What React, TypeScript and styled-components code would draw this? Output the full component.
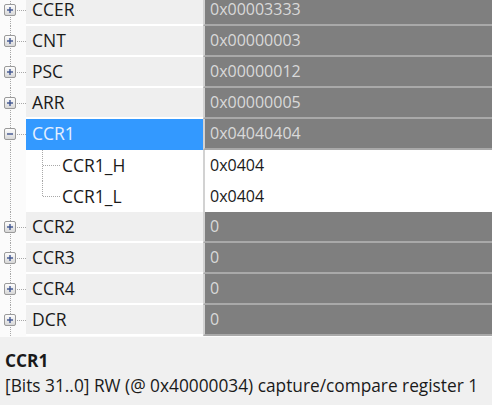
import { FunctionComponent } from 'react'
import { styled, createGlobalStyle } from 'styled-components'

type Register = {
  name: string
  value: string
  kind: 'collapsed' | 'expanded' | 'child'
  last?: boolean
}

const registers: Register[] = [
  { name: 'CCER', value: '0x00003333', kind: 'collapsed' },
  { name: 'CNT', value: '0x00000003', kind: 'collapsed' },
  { name: 'PSC', value: '0x00000012', kind: 'collapsed' },
  { name: 'ARR', value: '0x00000005', kind: 'collapsed' },
  { name: 'CCR1', value: '0x04040404', kind: 'expanded' },
  { name: 'CCR1_H', value: '0x0404', kind: 'child' },
  { name: 'CCR1_L', value: '0x0404', kind: 'child', last: true },
  { name: 'CCR2', value: '0', kind: 'collapsed' },
  { name: 'CCR3', value: '0', kind: 'collapsed' },
  { name: 'CCR4', value: '0', kind: 'collapsed' },
  { name: 'DCR', value: '0', kind: 'collapsed' }
]

const Gutter: FunctionComponent<{ kind: Register['kind'] }> = ({ kind }) => (
  <svg width='26' height='31' viewBox='0 0 26 31'>
    <line x1='10.5' y1='0' x2='10.5' y2='31' stroke='#a8a8a8' strokeDasharray='1 1' />
    {kind !== 'child' && (
      <>
        <line x1='15' y1='15.5' x2='26' y2='15.5' stroke='#a8a8a8' strokeDasharray='1 1' />
        <defs>
          <linearGradient id='boxFill' x1='0' y1='0' x2='0' y2='1'>
            <stop offset='0' stopColor='#ffffff' />
            <stop offset='1' stopColor='#d6d6d6' />
          </linearGradient>
        </defs>
        <rect x='4.5' y='9.5' width='11' height='11' rx='1.5' fill='url(#boxFill)' stroke='#9a9a9a' />
        <line x1='7' y1='15' x2='13' y2='15' stroke='#3f5590' strokeWidth='1.4' />
        {kind === 'collapsed' && <line x1='10' y1='12' x2='10' y2='18' stroke='#3f5590' strokeWidth='1.4' />}
      </>
    )}
  </svg>
)

const ChildLines: FunctionComponent<{ last?: boolean }> = ({ last }) => (
  <svg width='34' height='31' viewBox='0 0 34 31'>
    <line x1='16.5' y1='0' x2='16.5' y2={last ? 15.5 : 31} stroke='#a8a8a8' strokeDasharray='1 1' />
    <line x1='17' y1='15.5' x2='34' y2='15.5' stroke='#a8a8a8' strokeDasharray='1 1' />
  </svg>
)

const App: FunctionComponent = () => {
  return (
    <>
      <GlobalStyle />
      <Window>
        <Viewport>
          <List>
            {registers.map((reg) => (
              <Row key={reg.name}>
                <GutterCell>
                  <Gutter kind={reg.kind} />
                </GutterCell>
                <NameCell $kind={reg.kind}>
                  {reg.kind === 'child' && <ChildLines last={reg.last} />}
                  <span>{reg.name}</span>
                </NameCell>
                <ValueCell $child={reg.kind === 'child'}>{reg.value}</ValueCell>
              </Row>
            ))}
          </List>
        </Viewport>
        <InfoPanel>
          <InfoTitle>CCR1</InfoTitle>
          <InfoText>[Bits 31..0] RW (@ 0x40000034) capture/compare register 1</InfoText>
        </InfoPanel>
      </Window>
    </>
  )
}
export default App

const GlobalStyle = createGlobalStyle`
  html, body {
    margin: 0;
    padding: 0;
    background: #f0f0f0;
  }
  body {
    font-family: 'Open Sans', 'Noto Sans', sans-serif;
    font-size: 16px;
  }
`

const Window = styled.div`
  width: 492px;
  height: 405px;
  display: flex;
  flex-direction: column;
  overflow: hidden;
  background: #f0f0f0;
`

const Viewport = styled.div`
  height: 337px;
  overflow: hidden;
  background: #fbfbfb;
`

const List = styled.div`
  margin-top: -5px;
  display: flex;
  flex-direction: column;
`

const Row = styled.div`
  display: grid;
  grid-template-columns: 26px 177px 1fr;
  height: 31px;
`

const GutterCell = styled.div`
  display: flex;
  background: #fbfbfb;
`

const NameCell = styled.div<{ $kind: Register['kind'] }>`
  display: flex;
  align-items: center;
  box-sizing: border-box;
  padding-left: ${(p) => (p.$kind === 'child' ? '0' : '6px')};
  background: ${(p) => (p.$kind === 'expanded' ? '#3399ff' : p.$kind === 'child' ? '#ffffff' : '#efefef')};
  color: ${(p) => (p.$kind === 'expanded' ? '#e6f0ff' : '#1a1a1a')};
  border-bottom: 2px solid ${(p) => (p.$kind === 'expanded' ? '#3399ff' : '#ffffff')};
  font-size: 17.5px;
  white-space: nowrap;

  & > span {
    padding-left: ${(p) => (p.$kind === 'child' ? '2px' : '0')};
    line-height: 29px;
  }
`

const ValueCell = styled.div<{ $child: boolean }>`
  display: flex;
  align-items: center;
  box-sizing: border-box;
  padding-left: 5px;
  line-height: 29px;
  background: ${(p) => (p.$child ? '#ffffff' : '#7f7f7f')};
  color: ${(p) => (p.$child ? '#1a1a1a' : '#d9d9d9')};
  border-left: 2px solid #d2d2d2;
  border-bottom: 2px solid ${(p) => (p.$child ? '#dcdcdc' : '#a9a9a9')};
`

const InfoPanel = styled.div`
  flex: 1;
  display: flex;
  flex-direction: column;
  padding: 11px 5px 0;
  background: #f0f0f0;
  color: #1a1a1a;
  font-size: 17.3px;
`

const InfoTitle = styled.div`
  font-weight: 700;
  line-height: 25px;
`

const InfoText = styled.div`
  line-height: 25px;
  white-space: nowrap;
`
